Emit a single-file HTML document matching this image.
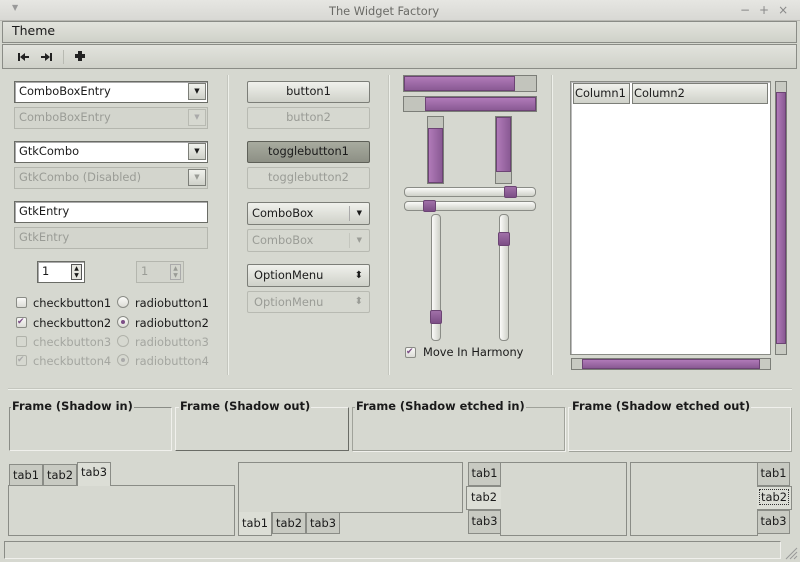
<!DOCTYPE html>
<html><head><meta charset="utf-8"><style>
*{box-sizing:border-box}
body{margin:0;width:800px;height:562px;overflow:hidden;background:#d6d8d0;font-family:"DejaVu Sans","Liberation Sans",sans-serif;font-size:11.4px;color:#1a1a1a;position:relative}
.a{position:absolute}
.entry{position:absolute;background:#fff;border:1px solid #6a6c66;box-shadow:inset 1px 1px 0 #aaa;padding:2px 4px;line-height:15px;white-space:nowrap}
.dentry{position:absolute;background:#d3d5cd;border:1px solid #b4b6ae;padding:2px 4px;line-height:15px;color:#9a9c96;white-space:nowrap}
.btn{position:absolute;border:1px solid #7c7e78;border-radius:2px;background:linear-gradient(#f0f1ec,#cfd1c9);text-align:center;line-height:19px;white-space:nowrap}
.dbtn{position:absolute;border:1px solid #b8bab2;border-radius:2px;background:#d6d8d0;text-align:center;line-height:19px;color:#9a9c96;white-space:nowrap}
.arr{position:absolute;right:1px;top:1px;width:18px;height:17px;border:1px solid #7c7e78;background:linear-gradient(#f0f1ec,#cfd1c9);font-size:7px;text-align:center;line-height:15px}
.sep{position:absolute;background:#c4c6be;border-right:1px solid #eef0ea}
.chk{position:absolute;width:11px;height:11px;border:1px solid #8a8c86;background:linear-gradient(#fafaf8,#dcdcd6);border-radius:2px}
.rad{position:absolute;width:12px;height:12px;border:1px solid #8a8c86;background:linear-gradient(#fafaf8,#dcdcd6);border-radius:50%}
.lbl{position:absolute;white-space:nowrap;line-height:14px}
.dis{color:#a4a6a0}
.trough{position:absolute;background:#c2c4bc;border:1px solid #7c7e78}
.pur{position:absolute;background:linear-gradient(#b07ab8,#8a5a94);border:1px solid #6c4474}
.purv{position:absolute;background:linear-gradient(90deg,#b07ab8,#8a5a94);border:1px solid #6c4474}
.stro{position:absolute;border:1px solid #8a8c86;border-radius:4px;background:linear-gradient(#fbfbf9,#cfd1c9)}
.strov{position:absolute;border:1px solid #8a8c86;border-radius:4px;background:linear-gradient(90deg,#fbfbf9,#cfd1c9)}
.knob{position:absolute;background:linear-gradient(#a070a8,#7c4e86);border:1px solid #6c4474;border-radius:2px}
.frame{position:absolute}
.flab{position:absolute;font-weight:bold;white-space:nowrap;background:#d6d8d0;padding:0 1px;line-height:14px}
.tab{position:absolute;border:1px solid #8a8c86;background:#c8cac2;text-align:center;line-height:20px}
.tabA{position:absolute;border:1px solid #8a8c86;background:#dcded6;text-align:center;line-height:20px}
.panel{position:absolute;border:1px solid #8a8c86;background:#d6d8d0}
</style></head><body>
<div class="a" style="left:0;top:0;width:800px;height:21px;background:linear-gradient(#e6e6e2,#d8d8d4);border-bottom:1px solid #b8b8b2"></div>
<div class="a" style="left:12px;top:3px;color:#999;font-size:8px">▼</div>
<div class="lbl" style="left:329px;top:4px;color:#6a6a66;font-size:11.4px">The Widget Factory</div>
<div class="lbl" style="left:740px;top:3px;color:#888;font-size:12px;letter-spacing:9px">−+×</div>
<div class="a" style="left:2px;top:21px;width:795px;height:22px;background:linear-gradient(#e2e3dd,#cfd1c9);border:1px solid #8a8c86"></div>
<div class="lbl" style="left:12px;top:24px;font-size:12.5px">Theme</div>
<div class="a" style="left:2px;top:44px;width:795px;height:25px;background:linear-gradient(#e2e3dd,#cfd1c9);border:1px solid #8a8c86"></div>
<svg class="a" style="left:16px;top:50px" width="60" height="14" viewBox="0 0 60 14">
<rect x="2" y="3" width="2" height="8" fill="#222"/><path d="M4 7 L9 3 V6 H13 V8 H9 V11 Z" fill="#222"/>
<path d="M25 6 H29 V3 L34 7 L29 11 V8 H25 Z" fill="#222"/><rect x="34" y="3" width="2" height="8" fill="#222"/>
<rect x="47" y="0" width="1" height="14" fill="#b8bab2"/>
</svg>
<svg class="a" style="left:74px;top:50px" width="12" height="12"><path d="M4 1H8V4H11V8H8V11H4V8H1V4H4Z" fill="#222"/></svg>

<div class="entry" style="left:14px;top:81px;width:194px;height:22px">ComboBoxEntry<div class="arr">▼</div></div>
<div class="dentry" style="left:14px;top:107px;width:194px;height:22px">ComboBoxEntry<div class="arr" style="border-color:#b8bab2;background:#d6d8d0;color:#aaa">▼</div></div>
<div class="entry" style="left:14px;top:141px;width:194px;height:22px">GtkCombo<div class="arr">▼</div></div>
<div class="dentry" style="left:14px;top:167px;width:194px;height:22px">GtkCombo (Disabled)<div class="arr">▼</div></div>
<div class="entry" style="left:14px;top:201px;width:194px;height:22px">GtkEntry</div>
<div class="dentry" style="left:14px;top:227px;width:194px;height:22px">GtkEntry</div>
<div class="entry" style="left:37px;top:261px;width:48px;height:22px">1<div class="a" style="right:2px;top:2px;width:11px;height:16px;border:1px solid #555;font-size:6px;line-height:7px;text-align:center;background:#e6e6e0">▲<br>▼</div></div>
<div class="dentry" style="left:136px;top:261px;width:48px;height:22px">1<div class="a" style="right:2px;top:2px;width:11px;height:16px;border:1px solid #aaa;font-size:6px;line-height:7px;text-align:center">▲<br>▼</div></div>
<div class="chk" style="left:16px;top:297px"></div><div class="lbl" style="left:33px;top:296px">checkbutton1</div>
<div class="rad" style="left:117px;top:296px"></div><div class="lbl" style="left:135px;top:296px">radiobutton1</div>
<div class="chk" style="left:16px;top:317px;color:#7c4e86;font-size:9px;line-height:9px">✔</div><div class="lbl" style="left:33px;top:316px">checkbutton2</div>
<div class="rad" style="left:117px;top:316px"><div class="a" style="left:3px;top:3px;width:4px;height:4px;border-radius:50%;background:#7c4e86"></div></div><div class="lbl" style="left:135px;top:316px">radiobutton2</div>
<div class="chk" style="left:16px;top:336px;border-color:#b0b2aa;background:#d6d8d0"></div><div class="lbl dis" style="left:33px;top:335px">checkbutton3</div>
<div class="rad" style="left:117px;top:335px;border-color:#b0b2aa;background:#d6d8d0"></div><div class="lbl dis" style="left:135px;top:335px">radiobutton3</div>
<div class="chk" style="left:16px;top:355px;border-color:#b0b2aa;background:#d6d8d0;color:#aaa;font-size:9px;line-height:9px">✔</div><div class="lbl dis" style="left:33px;top:354px">checkbutton4</div>
<div class="rad" style="left:117px;top:354px;border-color:#b0b2aa;background:#d6d8d0"><div class="a" style="left:3px;top:3px;width:4px;height:4px;border-radius:50%;background:#aaa"></div></div><div class="lbl dis" style="left:135px;top:354px">radiobutton4</div>

<div class="sep" style="left:227px;top:75px;width:2px;height:300px"></div>
<div class="sep" style="left:388px;top:75px;width:2px;height:300px"></div>
<div class="sep" style="left:551px;top:75px;width:2px;height:300px"></div>

<div class="btn" style="left:247px;top:81px;width:123px;height:22px">button1</div>
<div class="dbtn" style="left:247px;top:107px;width:123px;height:22px">button2</div>
<div class="btn" style="left:247px;top:141px;width:123px;height:22px;background:linear-gradient(#a8ab9f,#8d9085);border-color:#5e6058">togglebutton1</div>
<div class="dbtn" style="left:247px;top:167px;width:123px;height:22px">togglebutton2</div>
<div class="btn" style="left:247px;top:202px;width:123px;height:23px;text-align:left;padding-left:4px;line-height:21px">ComboBox<span class="a" style="right:19px;top:3px;width:1px;height:15px;background:#aaa"></span><span class="a" style="right:7px;top:0;font-size:7px">▼</span></div>
<div class="dbtn" style="left:247px;top:229px;width:123px;height:23px;text-align:left;padding-left:4px;line-height:21px">ComboBox<span class="a" style="right:19px;top:3px;width:1px;height:15px;background:#c4c6be"></span><span class="a" style="right:7px;top:0;font-size:7px">▼</span></div>
<div class="btn" style="left:247px;top:264px;width:123px;height:23px;text-align:left;padding-left:6px;line-height:21px">OptionMenu<span class="a" style="right:6px;top:0;font-size:10px">⬍</span></div>
<div class="dbtn" style="left:247px;top:291px;width:123px;height:22px;text-align:left;padding-left:6px;line-height:20px">OptionMenu<span class="a" style="right:6px;top:0;font-size:10px">⬍</span></div>

<div class="trough" style="left:403px;top:75px;width:134px;height:17px"><div class="pur" style="left:0;top:0;width:111px;height:15px"></div></div>
<div class="trough" style="left:403px;top:96px;width:134px;height:16px"><div class="pur" style="left:21px;top:0;width:111px;height:14px"></div></div>
<div class="trough" style="left:427px;top:116px;width:17px;height:68px"><div class="purv" style="left:0;top:11px;width:15px;height:55px"></div></div>
<div class="trough" style="left:495px;top:116px;width:17px;height:68px"><div class="purv" style="left:0;top:0;width:15px;height:55px"></div></div>
<div class="stro" style="left:404px;top:187px;width:132px;height:10px"></div><div class="knob" style="left:504px;top:186px;width:13px;height:12px"></div>
<div class="stro" style="left:404px;top:201px;width:132px;height:10px"></div><div class="knob" style="left:423px;top:200px;width:13px;height:12px"></div>
<div class="strov" style="left:431px;top:214px;width:10px;height:127px"></div><div class="knob" style="left:430px;top:310px;width:12px;height:14px"></div>
<div class="strov" style="left:499px;top:214px;width:10px;height:127px"></div><div class="knob" style="left:498px;top:232px;width:12px;height:14px"></div>
<div class="chk" style="left:405px;top:347px;color:#7c4e86;font-size:9px;line-height:9px">✔</div><div class="lbl" style="left:423px;top:345px">Move In Harmony</div>

<div class="a" style="left:570px;top:81px;width:201px;height:274px;background:#fff;border:1px solid #8a8c86;box-shadow:inset 1px 1px 0 #bbb"></div>
<div class="btn" style="left:573px;top:83px;width:57px;height:21px;text-align:left;padding-left:1px;border-radius:0;line-height:19px">Column1</div>
<div class="btn" style="left:632px;top:83px;width:136px;height:21px;text-align:left;padding-left:1px;border-radius:0;line-height:19px">Column2</div>
<div class="trough" style="left:775px;top:81px;width:12px;height:274px;background:#c8cac2"><div class="purv" style="left:0;top:10px;width:10px;height:252px"></div></div>
<div class="trough" style="left:571px;top:358px;width:200px;height:12px;background:#c8cac2"><div class="pur" style="left:10px;top:0;width:178px;height:10px"></div></div>

<div class="a" style="left:8px;top:388px;width:784px;height:2px;background:#c4c6be;border-bottom:1px solid #eef0ea"></div>

<div class="frame" style="left:9px;top:407px;width:163px;height:44px;border:1px solid #8a8c86;border-right-color:#f0f0ec;border-bottom-color:#f0f0ec"></div>
<div class="flab" style="left:11px;top:399px">Frame (Shadow in)</div>
<div class="frame" style="left:175px;top:407px;width:174px;height:44px;border:1px solid #f0f0ec;border-right-color:#6a6c66;border-bottom-color:#6a6c66"></div>
<div class="flab" style="left:179px;top:399px">Frame (Shadow out)</div>
<div class="frame" style="left:352px;top:407px;width:213px;height:44px;border:1px solid #a0a29a;box-shadow:1px 1px 0 #f0f0ec"></div>
<div class="flab" style="left:355px;top:399px">Frame (Shadow etched in)</div>
<div class="frame" style="left:568px;top:407px;width:223px;height:44px;border:1px solid #f0f0ec;box-shadow:1px 1px 0 #a0a29a"></div>
<div class="flab" style="left:571px;top:399px">Frame (Shadow etched out)</div>

<div class="panel" style="left:8px;top:485px;width:227px;height:51px"></div>
<div class="tab" style="left:9px;top:464px;width:34px;height:22px">tab1</div>
<div class="tab" style="left:43px;top:464px;width:34px;height:22px">tab2</div>
<div class="tabA" style="left:77px;top:462px;width:34px;height:24px;border-bottom:none;line-height:19px">tab3</div>

<div class="panel" style="left:238px;top:462px;width:225px;height:51px"></div>
<div class="tabA" style="left:238px;top:512px;width:34px;height:24px;border-top:none;line-height:22px">tab1</div>
<div class="tab" style="left:272px;top:512px;width:34px;height:22px">tab2</div>
<div class="tab" style="left:306px;top:512px;width:34px;height:22px">tab3</div>

<div class="panel" style="left:500px;top:462px;width:127px;height:74px"></div>
<div class="tab" style="left:468px;top:462px;width:33px;height:24px">tab1</div>
<div class="tabA" style="left:466px;top:486px;width:35px;height:24px;border-right:none">tab2</div>
<div class="tab" style="left:468px;top:510px;width:33px;height:24px">tab3</div>

<div class="panel" style="left:630px;top:462px;width:128px;height:74px"></div>
<div class="tab" style="left:757px;top:462px;width:33px;height:24px">tab1</div>
<div class="tabA" style="left:757px;top:486px;width:35px;height:24px;border-left:none"><span style="border:1px dotted #333;padding:0 1px">tab2</span></div>
<div class="tab" style="left:757px;top:510px;width:33px;height:24px">tab3</div>

<div class="a" style="left:4px;top:541px;width:777px;height:18px;border:1px solid #8a8c86;border-right-color:#f0f0ec;border-bottom-color:#f0f0ec"></div>
<svg class="a" style="left:784px;top:546px" width="14" height="14"><path d="M13 2L2 13M13 6L6 13M13 10L10 13" stroke="#999" stroke-width="1"/></svg>
</body></html>
